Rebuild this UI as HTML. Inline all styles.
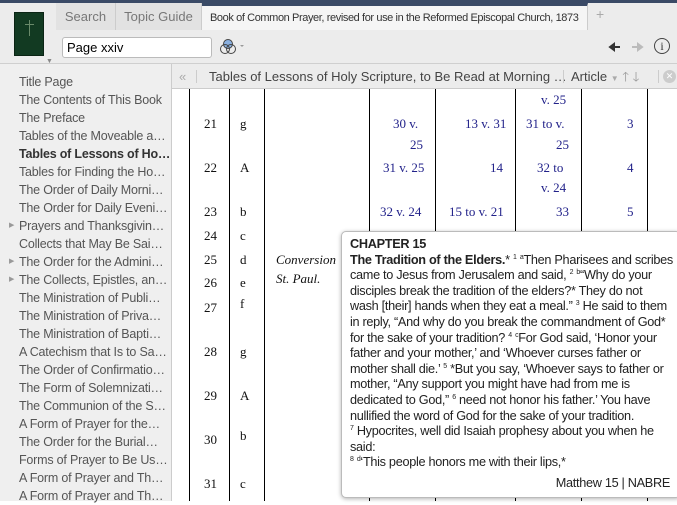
<!DOCTYPE html>
<html><head><meta charset="utf-8"><style>
*{margin:0;padding:0;box-sizing:border-box}
body{width:677px;height:501px;overflow:hidden;background:#fff;font-family:"Liberation Sans",sans-serif;position:relative}
.hdr{position:absolute;left:0;top:0;width:677px;height:64px;background:#ececec;border-bottom:1px solid #cfcfcf}
.hdr .topline{position:absolute;left:0;top:0;width:677px;height:3px;background:#3a4a66}
.book{position:absolute;left:14px;top:12px;width:30px;height:44px;background:#123a22;border:1px solid #0a2414}
.tab{position:absolute;top:3px;height:27px;font-size:13px;color:#777;line-height:27px;text-align:center;background:#e2e2e2;border-right:1px solid #ccc}
.act{background:#f5f5f5;color:#333;font-size:11px;letter-spacing:-0.4px;border-top:3px solid #3a4a66;line-height:24px}
.inp{position:absolute;left:62px;top:37px;width:150px;height:21px;background:#fff;border:1px solid #bbb;border-radius:3px;font-size:13px;line-height:19px;padding-left:4px;color:#000}
.side{position:absolute;left:0;top:64px;width:172px;height:437px;background:#efefef;border-right:1px solid #ccc}
.side div{position:absolute;left:19px;font-size:12.5px;letter-spacing:-0.2px;color:#555;white-space:nowrap;width:150px;overflow:hidden;height:18px;line-height:18px}
.side .b{font-weight:bold;color:#333}
.bar{position:absolute;left:172px;top:64px;width:505px;height:25px;background:#ececec;border-bottom:1px solid #ccc;font-size:13px;color:#444;line-height:25px}
.vl{position:absolute;top:89px;height:412px;width:1px;background:#000}
.t{position:absolute;font-family:"Liberation Serif",serif;font-size:13px;color:#111;white-space:nowrap}
.blu{color:#22228a}
.pop{position:absolute;left:341px;top:231px;width:340px;height:267px;background:#fff;border:1px solid #bbb;border-radius:5px;box-shadow:0 1px 4px rgba(0,0,0,.3);padding:5px 8px;font-size:12.7px;letter-spacing:-0.3px;line-height:15.6px;color:#222;white-space:nowrap}
sup{font-size:7px;vertical-align:5px;line-height:0}
</style></head><body>
<div class="hdr"><div class="topline"></div>
<div class="book"><div style="position:absolute;left:14px;top:7px;width:1px;height:16px;background:#6a8a6a"></div><div style="position:absolute;left:10px;top:11px;width:9px;height:1px;background:#6a8a6a"></div></div>
<div style="position:absolute;left:46px;top:58px;font-size:7px;color:#888">▼</div>
<div class="tab" style="left:56px;width:60px">Search</div>
<div class="tab" style="left:116px;width:86px">Topic Guide</div>
<div class="tab act" style="left:202px;white-space:nowrap;overflow:hidden;text-align:left;padding-left:8px;width:386px">Book of Common Prayer, revised for use in the Reformed Episcopal Church, 1873 <span style="color:#aaa;margin-left:8px">✕</span></div>
<div style="position:absolute;left:596px;top:6px;font-size:14px;color:#aaa">+</div>
<div class="inp">Page xxiv</div>
<div style="position:absolute;left:220px;top:38px;width:26px;height:18px"><svg width="26" height="18"><circle cx="8" cy="6" r="4.5" fill="#8ab0e0" stroke="#444"/><circle cx="5" cy="11" r="4.5" fill="none" stroke="#444"/><circle cx="11" cy="11" r="4.5" fill="none" stroke="#444"/><path d="M20 7l4 0-2 2z" fill="#999"/></svg></div>
<svg style="position:absolute;left:608px;top:40px" width="40" height="14"><path d="M2 7h10M2 7l4-3v6z" stroke="#333" stroke-width="2" fill="#333"/><path d="M24 7h10M34 7l-4-3v6z" stroke="#bbb" stroke-width="2" fill="#bbb"/></svg>
<div style="position:absolute;left:654px;top:38px;width:16px;height:16px;border:1.3px solid #444;border-radius:50%;font-family:'Liberation Serif',serif;font-size:12px;text-align:center;line-height:14px;color:#333">i</div>
</div>
<div class="side">
<div style="top:9px">Title Page</div>
<div style="top:27px">The Contents of This Book</div>
<div style="top:45px">The Preface</div>
<div style="top:63px">Tables of the Moveable a…</div>
<div style="top:81px" class="b">Tables of Lessons of Ho…</div>
<div style="top:99px">Tables for Finding the Ho…</div>
<div style="top:117px">The Order of Daily Morni…</div>
<div style="top:135px">The Order for Daily Eveni…</div>
<div style="top:153px">Prayers and Thanksgivin…</div>
<div style="top:171px">Collects that May Be Sai…</div>
<div style="top:189px">The Order for the Admini…</div>
<div style="top:207px">The Collects, Epistles, an…</div>
<div style="top:225px">The Ministration of Publi…</div>
<div style="top:243px">The Ministration of Priva…</div>
<div style="top:261px">The Ministration of Bapti…</div>
<div style="top:279px">A Catechism that Is to Sa…</div>
<div style="top:297px">The Order of Confirmatio…</div>
<div style="top:315px">The Form of Solemnizati…</div>
<div style="top:333px">The Communion of the S…</div>
<div style="top:351px">A Form of Prayer for the…</div>
<div style="top:369px">The Order for the Burial…</div>
<div style="top:387px">Forms of Prayer to Be Us…</div>
<div style="top:405px">A Form of Prayer and Th…</div>
<div style="top:423px">A Form of Prayer and Th…</div>
<span style="position:absolute;left:9px;top:157px;font-size:7px;color:#999">▶</span>
<span style="position:absolute;left:9px;top:193px;font-size:7px;color:#999">▶</span>
<span style="position:absolute;left:9px;top:211px;font-size:7px;color:#999">▶</span>
</div>
<div class="bar"><span style="position:absolute;left:7px;color:#aaa">«</span><span style="position:absolute;left:24px;top:6px;width:1px;height:13px;background:#ccc"></span><span style="position:absolute;left:37px">Tables of Lessons of Holy Scripture, to Be Read at Morning …</span><span style="position:absolute;left:391px;top:6px;width:1px;height:13px;background:#ccc"></span><span style="position:absolute;left:399px">Article <span style="color:#aaa;font-size:8px">▼</span> <span style="color:#999">🡑 🡓</span></span><span style="position:absolute;left:486px;top:6px;width:1px;height:13px;background:#ccc"></span><span style="position:absolute;left:491px;top:6px;width:13px;height:13px;border-radius:50%;background:#ccc;color:#fff;font-size:9px;line-height:13px;text-align:center">✕</span></div>
<div class="vl" style="left:189px"></div><div class="vl" style="left:229px"></div><div class="vl" style="left:264px"></div><div class="vl" style="left:369px"></div><div class="vl" style="left:435px"></div><div class="vl" style="left:515px"></div><div class="vl" style="left:581px"></div><div class="vl" style="left:647px"></div>
<div style="position:absolute;left:664px;top:89px;width:13px;height:412px;background:#fff"></div>
<div class="t blu" style="left:541px;top:92px">v. 25</div>
<div class="t" style="left:204px;top:116px">21</div><div class="t" style="left:240px;top:116px">g</div><div class="t blu" style="left:393px;top:116px">30 v.</div><div class="t blu" style="left:465px;top:116px">13 v. 31</div><div class="t blu" style="left:526px;top:116px">31 to v.</div><div class="t blu" style="left:627px;top:116px">3</div>
<div class="t blu" style="left:410px;top:137px">25</div><div class="t blu" style="left:556px;top:137px">25</div>
<div class="t" style="left:204px;top:160px">22</div><div class="t" style="left:240px;top:160px">A</div><div class="t blu" style="left:383px;top:160px">31 v. 25</div><div class="t blu" style="left:490px;top:160px">14</div><div class="t blu" style="left:537px;top:160px">32 to</div><div class="t blu" style="left:627px;top:160px">4</div>
<div class="t blu" style="left:541px;top:180px">v. 24</div>
<div class="t" style="left:204px;top:204px">23</div><div class="t" style="left:240px;top:204px">b</div><div class="t blu" style="left:380px;top:204px">32 v. 24</div><div class="t blu" style="left:449px;top:204px">15 to v. 21</div><div class="t blu" style="left:556px;top:204px">33</div><div class="t blu" style="left:627px;top:204px">5</div>
<div class="t" style="left:204px;top:228px">24</div><div class="t" style="left:240px;top:228px">c</div>
<div class="t" style="left:204px;top:252px">25</div><div class="t" style="left:240px;top:252px">d</div><div class="t" style="left:276px;top:252px;font-style:italic">Conversion</div>
<div class="t" style="left:204px;top:275px">26</div><div class="t" style="left:240px;top:275px">e</div><div class="t" style="left:276px;top:271px;font-style:italic">St. Paul.</div>
<div class="t" style="left:204px;top:300px">27</div><div class="t" style="left:240px;top:296px">f</div>
<div class="t" style="left:204px;top:344px">28</div><div class="t" style="left:240px;top:344px">g</div>
<div class="t" style="left:204px;top:388px">29</div><div class="t" style="left:240px;top:388px">A</div>
<div class="t" style="left:204px;top:432px">30</div><div class="t" style="left:240px;top:428px">b</div>
<div class="t" style="left:204px;top:476px">31</div><div class="t" style="left:240px;top:476px">c</div>
<div class="pop">
<b>CHAPTER 15</b><br>
<b>The Tradition of the Elders.</b>* <sup>1</sup> <sup>a</sup>Then Pharisees and scribes<br>
came to Jesus from Jerusalem and said, <sup>2</sup> <sup>b</sup>“Why do your<br>
disciples break the tradition of the elders?* They do not<br>
wash [their] hands when they eat a meal.” <sup>3</sup> He said to them<br>
in reply, “And why do you break the commandment of God*<br>
for the sake of your tradition? <sup>4</sup> <sup>c</sup>For God said, ‘Honor your<br>
father and your mother,’ and ‘Whoever curses father or<br>
mother shall die.’ <sup>5</sup> *But you say, ‘Whoever says to father or<br>
mother, “Any support you might have had from me is<br>
dedicated to God,” <sup>6</sup> need not honor his father.’ You have<br>
nullified the word of God for the sake of your tradition.<br>
<sup>7</sup> Hypocrites, well did Isaiah prophesy about you when he<br>
said:<br>
<sup>8</sup> <sup>d</sup>‘This people honors me with their lips,*
<div style="position:absolute;right:10px;top:244px">Matthew 15 | NABRE</div>
</div>
</body></html>
